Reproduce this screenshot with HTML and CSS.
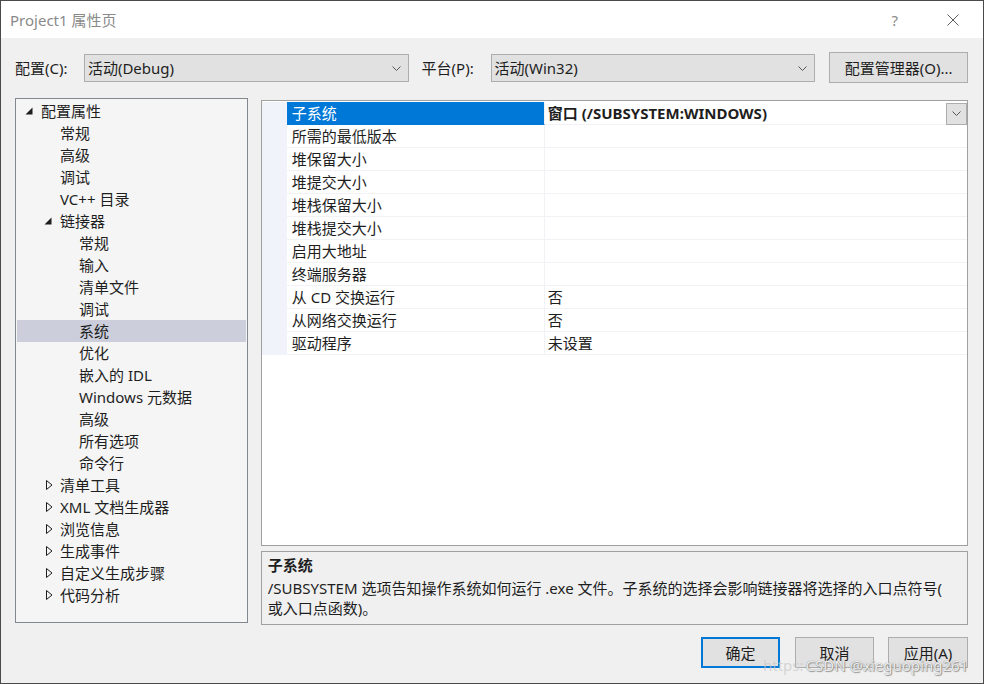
FILE: index.html
```html
<!DOCTYPE html>
<html>
<head>
<meta charset="utf-8">
<link rel="stylesheet" href="styles.css">
</head>
<body>
<div class="window">
  <div class="titlebar">
    <span class="title">Project1 属性页</span>
    <span class="help">?</span>
    <svg class="close" width="12" height="12" viewBox="0 0 12 12"><path d="M0.5 0.5 L11.5 11.5 M11.5 0.5 L0.5 11.5" stroke="#5a5a5a" stroke-width="1" fill="none"/></svg>
  </div>
  <div class="content">
    <div class="config-row">
      <span class="lbl">配置(C):</span>
      <div class="combo"><span>活动(Debug)</span><svg class="chev" width="9" height="5" viewBox="0 0 9 5"><path d="M0.5 0.5 L4.5 4.5 L8.5 0.5" stroke="#555" fill="none"/></svg></div>
      <span class="lbl lbl2">平台(P):</span>
      <div class="combo"><span>活动(Win32)</span><svg class="chev" width="9" height="5" viewBox="0 0 9 5"><path d="M0.5 0.5 L4.5 4.5 L8.5 0.5" stroke="#555" fill="none"/></svg></div>
      <button class="btn mgr">配置管理器(O)...</button>
    </div>
    <div class="panels">
      <div class="tree">
        <div class="row l0"><svg class="tg" width="8" height="8" viewBox="0 0 8 8"><path d="M7.5 0.5 L7.5 7.5 L0.5 7.5 Z" fill="#1e1e1e"/></svg><span>配置属性</span></div>
        <div class="row l1"><i class="tg"></i><span>常规</span></div>
        <div class="row l1"><i class="tg"></i><span>高级</span></div>
        <div class="row l1"><i class="tg"></i><span>调试</span></div>
        <div class="row l1"><i class="tg"></i><span>VC++ 目录</span></div>
        <div class="row l1"><svg class="tg" width="8" height="8" viewBox="0 0 8 8"><path d="M7.5 0.5 L7.5 7.5 L0.5 7.5 Z" fill="#1e1e1e"/></svg><span>链接器</span></div>
        <div class="row l2"><i class="tg"></i><span>常规</span></div>
        <div class="row l2"><i class="tg"></i><span>输入</span></div>
        <div class="row l2"><i class="tg"></i><span>清单文件</span></div>
        <div class="row l2"><i class="tg"></i><span>调试</span></div>
        <div class="row l2 sel"><i class="tg"></i><span>系统</span></div>
        <div class="row l2"><i class="tg"></i><span>优化</span></div>
        <div class="row l2"><i class="tg"></i><span>嵌入的 IDL</span></div>
        <div class="row l2"><i class="tg"></i><span>Windows 元数据</span></div>
        <div class="row l2"><i class="tg"></i><span>高级</span></div>
        <div class="row l2"><i class="tg"></i><span>所有选项</span></div>
        <div class="row l2"><i class="tg"></i><span>命令行</span></div>
        <div class="row l1"><svg class="tg col" width="8" height="10" viewBox="0 0 8 10"><path d="M1.5 0.5 L7 5 L1.5 9.5 Z" fill="none" stroke="#1e1e1e"/></svg><span>清单工具</span></div>
        <div class="row l1"><svg class="tg col" width="8" height="10" viewBox="0 0 8 10"><path d="M1.5 0.5 L7 5 L1.5 9.5 Z" fill="none" stroke="#1e1e1e"/></svg><span>XML 文档生成器</span></div>
        <div class="row l1"><svg class="tg col" width="8" height="10" viewBox="0 0 8 10"><path d="M1.5 0.5 L7 5 L1.5 9.5 Z" fill="none" stroke="#1e1e1e"/></svg><span>浏览信息</span></div>
        <div class="row l1"><svg class="tg col" width="8" height="10" viewBox="0 0 8 10"><path d="M1.5 0.5 L7 5 L1.5 9.5 Z" fill="none" stroke="#1e1e1e"/></svg><span>生成事件</span></div>
        <div class="row l1"><svg class="tg col" width="8" height="10" viewBox="0 0 8 10"><path d="M1.5 0.5 L7 5 L1.5 9.5 Z" fill="none" stroke="#1e1e1e"/></svg><span>自定义生成步骤</span></div>
        <div class="row l1"><svg class="tg col" width="8" height="10" viewBox="0 0 8 10"><path d="M1.5 0.5 L7 5 L1.5 9.5 Z" fill="none" stroke="#1e1e1e"/></svg><span>代码分析</span></div>
      </div>
      <div class="right">
        <div class="grid">
          <div class="prow sel"><div class="margin"></div><div class="name">子系统</div><div class="val bold"><span>窗口 (/SUBSYSTEM:WINDOWS)</span><div class="dd"><svg width="9" height="5" viewBox="0 0 9 5"><path d="M0.5 0.5 L4.5 4.5 L8.5 0.5" stroke="#555" fill="none"/></svg></div></div></div>
          <div class="prow"><div class="margin"></div><div class="name">所需的最低版本</div><div class="val"></div></div>
          <div class="prow"><div class="margin"></div><div class="name">堆保留大小</div><div class="val"></div></div>
          <div class="prow"><div class="margin"></div><div class="name">堆提交大小</div><div class="val"></div></div>
          <div class="prow"><div class="margin"></div><div class="name">堆栈保留大小</div><div class="val"></div></div>
          <div class="prow"><div class="margin"></div><div class="name">堆栈提交大小</div><div class="val"></div></div>
          <div class="prow"><div class="margin"></div><div class="name">启用大地址</div><div class="val"></div></div>
          <div class="prow"><div class="margin"></div><div class="name">终端服务器</div><div class="val"></div></div>
          <div class="prow"><div class="margin"></div><div class="name">从 CD 交换运行</div><div class="val">否</div></div>
          <div class="prow"><div class="margin"></div><div class="name">从网络交换运行</div><div class="val">否</div></div>
          <div class="prow"><div class="margin"></div><div class="name">驱动程序</div><div class="val">未设置</div></div>
        </div>
        <div class="desc">
          <div class="dtitle">子系统</div>
          <div class="dtext">/SUBSYSTEM 选项告知操作系统如何运行 .exe 文件。子系统的选择会影响链接器将选择的入口点符号(<br>或入口点函数)。</div>
        </div>
      </div>
    </div>
    <div class="buttons">
      <button class="btn ok">确定</button>
      <button class="btn">取消</button>
      <button class="btn apply">应用(A)</button>
    </div>
  </div>
  <div class="watermark"><span class="wm1">https:</span><span class="wm2">CSDN @xieguoping261</span></div>
</div>
</body>
</html>
```

FILE: styles.css
```css
* { box-sizing: border-box; }
body {
  margin: 0;
  font-family: "Noto Sans", "Noto Sans CJK SC", sans-serif;
  font-size: 15px;
  color: #1e1e1e;
}
.window {
  position: relative;
  width: 984px;
  height: 684px;
  border: 1px solid #4a4a4a;
  background: #f0f0f0;
  display: flex;
  flex-direction: column;
}
.titlebar {
  height: 37px;
  background: #ffffff;
  display: flex;
  align-items: center;
  padding-left: 9px;
}
.title {
  color: #8a8a8a;
  font-size: 15px;
  line-height: 20px;
  flex: 1;
}
.help {
  color: #8a8a8a;
  font-size: 15px;
  line-height: 20px;
  margin-right: 49px;
}
.close { margin-right: 24px; }
.content {
  flex: 1;
  padding: 14px 15px 0 14px;
  display: flex;
  flex-direction: column;
}
.config-row {
  display: flex;
  align-items: center;
  height: 31px;
}
.lbl {
  width: 69px;
  line-height: 20px;
}
.lbl2 { width: 69px; margin-left: 13px; }
.combo {
  width: 325px;
  height: 28px;
  background: #e1e1e1;
  border: 1px solid #adadad;
  display: flex;
  align-items: center;
  justify-content: space-between;
  padding: 0 7px 0 3px;
  line-height: 20px;
}
.chev { margin-top: 1px; }
.btn {
  font-family: inherit;
  font-size: 15px;
  color: #1e1e1e;
  background: #e1e1e1;
  border: 1px solid #adadad;
  height: 31px;
  padding: 0;
  line-height: 20px;
}
.mgr { width: 139px; margin-left: 14px; }
.panels {
  display: flex;
  margin-top: 15px;
  height: 527px;
}
.tree {
  width: 233px;
  height: 525px;
  background: #f5f5f5;
  border: 1px solid #828790;
  padding: 1px 1px;
}
.row {
  height: 22px;
  display: flex;
  align-items: center;
  line-height: 20px;
  white-space: nowrap;
}
.row.l0 { padding-left: 8px; }
.row.l1 { padding-left: 27px; }
.row.l2 { padding-left: 46px; }
.row.sel { background: #cccedb; }
.tg {
  display: block;
  width: 16px;
  flex: none;
}
svg.tg { width: 8px; margin-right: 8px; }
svg.tg.col { margin-left: 1px; margin-right: 7px; }
.right {
  margin-left: 13px;
  width: 708px;
  padding-top: 2px;
  display: flex;
  flex-direction: column;
}
.grid {
  height: 446px;
  background: #ffffff;
  border: 1px solid #a0a0a0;
  padding-top: 1px;
}
.prow {
  display: flex;
  height: 23px;
  line-height: 20px;
}
.margin {
  width: 25px;
  background: #f0f3f9;
}
.name {
  width: 258px;
  padding-left: 5px;
  border-bottom: 1px solid #f0f2f5;
  border-right: 1px solid #f0f2f5;
  display: flex;
  align-items: center;
}
.val {
  flex: 1;
  padding-left: 3px;
  border-bottom: 1px solid #f0f2f5;
  display: flex;
  align-items: center;
  justify-content: space-between;
}
.prow.sel .name {
  background: #0078d7;
  color: #ffffff;
  border-bottom-color: #0078d7;
}
.bold { font-weight: bold; }
.dd {
  width: 21px;
  height: 22px;
  background: #e1e1e1;
  border: 1px solid #adadad;
  display: flex;
  align-items: center;
  justify-content: center;
  margin-top: 1px;
}
.desc {
  margin-top: 5px;
  height: 74px;
  border: 1px solid #a0a0a0;
  background: #f0f0f0;
  padding: 3px 6px 0 6px;
}
.dtitle {
  font-weight: bold;
  line-height: 20px;
  margin-bottom: 3px;
}
.dtext {
  line-height: 20px;
  white-space: nowrap;
}
.buttons {
  display: flex;
  justify-content: flex-end;
  margin-top: 12px;
}
.buttons .btn { width: 79px; margin-left: 15px; }
.buttons .apply { width: 80px; margin-left: 14px; }
.ok { border: 2px solid #0078d7; }
.watermark {
  position: absolute;
  left: 762px;
  top: 655px;
  font-size: 15px;
  line-height: 18px;
  white-space: nowrap;
}
.wm1 { color: rgba(200,200,200,0.7); }
.wm2 {
  color: rgba(255,255,255,0.85);
  text-shadow: 0 0 1px #777, 1px 1px 1px #999;
  margin-left: 2px;
}
```
